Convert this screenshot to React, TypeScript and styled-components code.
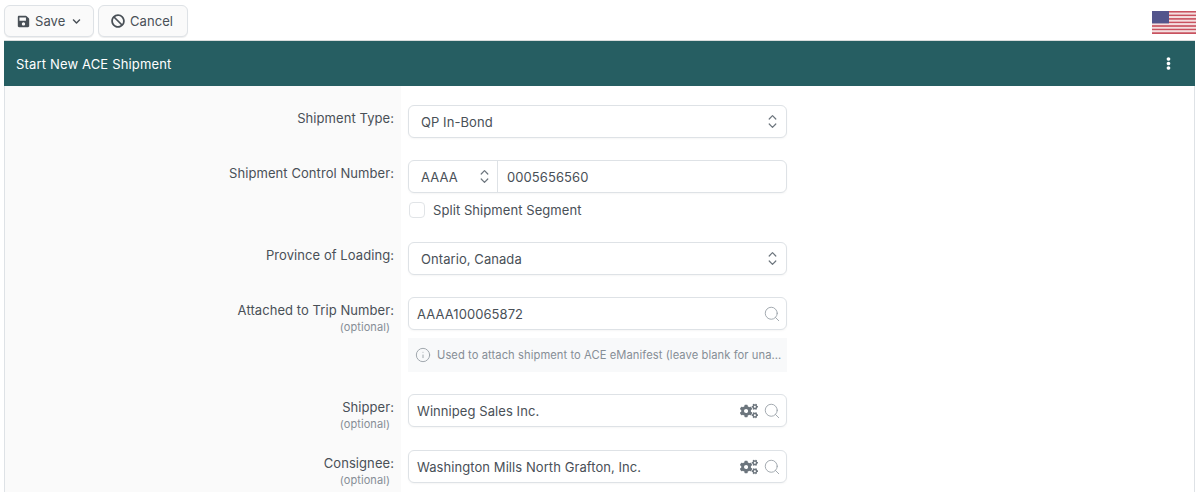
import React from "react";
import styled, { createGlobalStyle } from "styled-components";
import { Search, Info } from "lucide-react";
import { FaSave, FaBan, FaCogs, FaEllipsisV, FaChevronDown } from "react-icons/fa";

const Global = createGlobalStyle`
  html, body { margin: 0; padding: 0; background: #fff; height: 492px; overflow: hidden; }
  body { font-family: Inter, "Liberation Sans", sans-serif; font-size: 13px; color: #495057; letter-spacing: 0.07px; }
  * { box-sizing: border-box; }
`;

const Page = styled.div`
  width: 1200px;
  height: 492px;
  overflow: hidden;
  padding: 0 5px 0 4px;
`;

const Toolbar = styled.div`
  height: 40px;
  padding-top: 5px;
  display: flex;
  gap: 4px;
  position: relative;
  align-items: flex-start;
`;

const ToolButton = styled.div<{ $w: number }>`
  width: ${(p) => p.$w}px;
  height: 32px;
  display: flex;
  align-items: center;
  padding-left: 12px;
  gap: 5px;
  border: 1px solid #dee2e6;
  border-radius: 6px;
  background: #fafafa;
  box-shadow: 0 1px 1px rgba(0, 0, 0, 0.07);
  font-size: 13px;
  color: #495057;
`;

const Flag = styled.svg`
  position: absolute;
  right: -1px;
  top: 11px;
`;

const Panel = styled.div`
  border: 1px solid #dee2e6;
  border-top: 0;
  border-bottom: 0;
  height: 452px;
`;

const Header = styled.div`
  height: 46px;
  margin: 0 -1px;
  background: #265e62;
  color: #fff;
  display: flex;
  align-items: center;
  justify-content: space-between;
  padding: 0 20px 0 12px;
  font-size: 13px;
  font-weight: 400;
  letter-spacing: 0.16px;
  border-top: 1px solid #d8dcdc;
`;

const Form = styled.div`
  display: grid;
  grid-template-columns: 396px 1fr;
  height: 406px;
`;

const Labels = styled.div`
  background: #fafafa;
  display: flex;
  flex-direction: column;
  align-items: flex-end;
  padding: 24px 7px 0 0;
`;

const LabelBlock = styled.div<{ $h: number }>`
  height: ${(p) => p.$h}px;
  flex: none;
  text-align: right;
  color: #495057;
  font-size: 13px;
  line-height: 17px;
`;

const Optional = styled.div`
  font-size: 11px;
  line-height: 17px;
  color: #868e96;
  padding-right: 4px;
`;

const Fields = styled.div`
  padding: 19px 0 0 7px;
  width: 386px;
  display: flex;
  flex-direction: column;
  background: #fff;
`;

const Field = styled.div<{ $mb?: number }>`
  height: 33px;
  flex: none;
  border: 1px solid #dee2e6;
  border-radius: 6px;
  background: #fff;
  box-shadow: 0 1px 2px rgba(0, 0, 0, 0.04);
  display: flex;
  align-items: center;
  margin-bottom: ${(p) => p.$mb ?? 0}px;
  font-size: 13px;
  color: #495057;
`;

const SelectText = styled.span`
  flex: 1;
  padding-left: 12px;
`;

const InputText = styled.span<{ $pl?: number }>`
  flex: 1;
  padding-left: ${(p) => p.$pl ?? 8}px;
`;

const Prefix = styled.div`
  width: 89px;
  flex: none;
  height: 100%;
  border-right: 1px solid #dee2e6;
  display: flex;
  align-items: center;
  padding-left: 12px;
  justify-content: space-between;
  padding-right: 8px;
`;

const CheckRow = styled.div`
  display: flex;
  align-items: center;
  gap: 8px;
  height: 17px;
  margin: 8px 0 24px 1px;
  font-size: 13px;
  color: #495057;
`;

const Check = styled.span`
  width: 16px;
  height: 16px;
  border: 1.5px solid #e1e4e7;
  border-radius: 4px;
  background: #fff;
`;

const Hint = styled.div`
  height: 34px;
  flex: none;
  margin: 8px 0 22px;
  background: #f8f9fa;
  display: flex;
  align-items: center;
  gap: 6px;
  padding-left: 7px;
  font-size: 11.2px;
  color: #868e96;
  white-space: nowrap;
`;

const IconGroup = styled.span<{ $pr?: number }>`
  display: flex;
  align-items: center;
  gap: 5px;
  padding-right: ${(p) => p.$pr ?? 5}px;
`;

const FlagIcon = () => {
  const stripes = [];
  for (let i = 0; i < 13; i++) {
    stripes.push(
      <rect key={i} x="0" y={(i * 23) / 13} width="44" height={23 / 13} fill={i % 2 === 0 ? "#c8525f" : "#f4dfe0"} />
    );
  }
  return (
    <Flag width="44" height="23" viewBox="0 0 44 23">
      {stripes}
      <rect x="0" y="0" width="17" height="12.4" fill="#53558c" />
    </Flag>
  );
};

const Updown = () => (
  <svg width="9" height="15" viewBox="0 0 9 15" fill="none" stroke="#6c757d" strokeWidth="1.2" strokeLinecap="round" strokeLinejoin="round">
    <path d="M1.2 5 4.5 1.6 7.8 5" />
    <path d="M1.2 10 4.5 13.4 7.8 10" />
  </svg>
);
const Mag = () => <Search size={18} color="#9aa1a8" strokeWidth={1.2} />;

export default function App() {
  return (
    <Page>
      <Global />
      <Toolbar>
        <ToolButton $w={90}>
          <FaSave size={13} />
          <span>Save</span>
          <FaChevronDown size={9} style={{ marginLeft: 2 }} />
        </ToolButton>
        <ToolButton $w={90}>
          <FaBan size={14} />
          <span>Cancel</span>
        </ToolButton>
        <FlagIcon />
      </Toolbar>
      <Panel>
        <Header>
          <span>Start New ACE Shipment</span>
          <FaEllipsisV size={13} />
        </Header>
        <Form>
          <Labels>
            <LabelBlock $h={55}>Shipment Type:</LabelBlock>
            <LabelBlock $h={82}>Shipment Control Number:</LabelBlock>
            <LabelBlock $h={55}>Province of Loading:</LabelBlock>
            <LabelBlock $h={97}>Attached to Trip Number:<Optional>(optional)</Optional></LabelBlock>
            <LabelBlock $h={56}>Shipper:<Optional>(optional)</Optional></LabelBlock>
            <LabelBlock $h={40}>Consignee:<Optional>(optional)</Optional></LabelBlock>
          </Labels>
          <Fields>
            <Field $mb={22}>
              <SelectText>QP In-Bond</SelectText>
              <IconGroup $pr={9}><Updown /></IconGroup>
            </Field>
            <Field>
              <Prefix>AAAA<Updown /></Prefix>
              <InputText $pl={9}>0005656560</InputText>
            </Field>
            <CheckRow><Check />Split Shipment Segment</CheckRow>
            <Field $mb={22}>
              <SelectText>Ontario, Canada</SelectText>
              <IconGroup $pr={9}><Updown /></IconGroup>
            </Field>
            <Field>
              <InputText>AAAA100065872</InputText>
              <IconGroup><Mag /></IconGroup>
            </Field>
            <Hint><Info size={16} color="#9aa1a8" strokeWidth={1.4} />Used to attach shipment to ACE eManifest (leave blank for una...</Hint>
            <Field $mb={23}>
              <InputText>Winnipeg Sales Inc.</InputText>
              <IconGroup><FaCogs size={18} color="#6c757d" /><Mag /></IconGroup>
            </Field>
            <Field>
              <InputText>Washington Mills North Grafton, Inc.</InputText>
              <IconGroup><FaCogs size={18} color="#6c757d" /><Mag /></IconGroup>
            </Field>
          </Fields>
        </Form>
      </Panel>
    </Page>
  );
}
